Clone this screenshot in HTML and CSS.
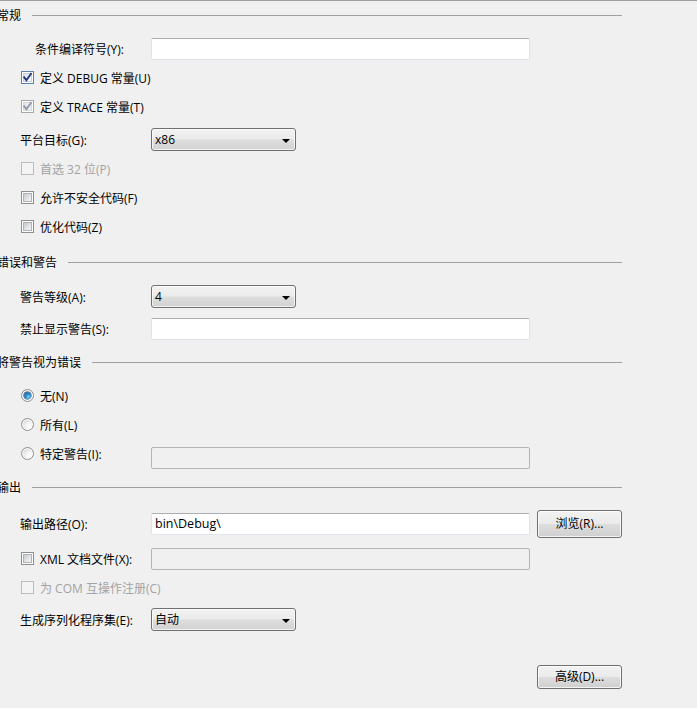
FILE: index.html
```html
<!DOCTYPE html>
<html lang="zh-CN">
<head>
<meta charset="utf-8">
<title>生成</title>
<link rel="stylesheet" href="styles.css">
</head>
<body>
<div class="frame">
  <div class="page">
    <section class="group">
      <div class="group-head"><span class="group-title">常规</span><i class="rule"></i></div>
      <div class="group-body">
        <div class="row">
          <span class="lbl lbl-indent">条件编译符号(Y):</span>
          <div class="textbox"></div>
        </div>
        <div class="row">
          <span class="check checked focus"><svg viewBox="0 0 13 13" width="13" height="13"><path d="M3.2 6.4 L5.4 9.2 L10 2.8" fill="none" stroke="#21357f" stroke-width="1.9" stroke-linecap="square"/></svg></span>
          <span class="opt">定义 DEBUG 常量(U)</span>
        </div>
        <div class="row">
          <span class="check checked dim"><svg viewBox="0 0 13 13" width="13" height="13"><path d="M3.2 6.4 L5.4 9.2 L10 2.8" fill="none" stroke="#8f96ad" stroke-width="1.9" stroke-linecap="square"/></svg></span>
          <span class="opt">定义 TRACE 常量(T)</span>
        </div>
        <div class="row sp4">
          <span class="lbl">平台目标(G):</span>
          <div class="combo"><span>x86</span></div>
        </div>
        <div class="row">
          <span class="check disabled"></span>
          <span class="opt muted">首选 32 位(P)</span>
        </div>
        <div class="row">
          <span class="check"></span>
          <span class="opt">允许不安全代码(F)</span>
        </div>
        <div class="row">
          <span class="check"></span>
          <span class="opt">优化代码(Z)</span>
        </div>
      </div>
    </section>

    <section class="group g-gap7">
      <div class="group-head"><span class="group-title">错误和警告</span><i class="rule"></i></div>
      <div class="group-body pt6">
        <div class="row">
          <span class="lbl">警告等级(A):</span>
          <div class="combo"><span>4</span></div>
        </div>
        <div class="row sp3">
          <span class="lbl">禁止显示警告(S):</span>
          <div class="textbox"></div>
        </div>
      </div>
    </section>

    <section class="group g-gap5">
      <div class="group-head"><span class="group-title">将警告视为错误</span><i class="rule"></i></div>
      <div class="group-body">
        <div class="row">
          <span class="radio selected"></span>
          <span class="opt">无(N)</span>
        </div>
        <div class="row">
          <span class="radio"></span>
          <span class="opt">所有(L)</span>
        </div>
        <div class="row">
          <span class="radio"></span>
          <span class="opt opt-col">特定警告(I):</span>
          <div class="textbox disabled low"></div>
        </div>
      </div>
    </section>

    <section class="group g-gap5">
      <div class="group-head"><span class="group-title">输出</span><i class="rule"></i></div>
      <div class="group-body pt8">
        <div class="row">
          <span class="lbl">输出路径(O):</span>
          <div class="textbox"><span>bin\Debug\</span></div>
          <div class="button tall">浏览(R)...</div>
        </div>
        <div class="row sp6">
          <span class="check"></span>
          <span class="opt opt-col">XML 文档文件(X):</span>
          <div class="textbox disabled"></div>
        </div>
        <div class="row">
          <span class="check disabled"></span>
          <span class="opt muted">为 COM 互操作注册(C)</span>
        </div>
        <div class="row sp3">
          <span class="lbl">生成序列化程序集(E):</span>
          <div class="combo"><span>自动</span></div>
        </div>
      </div>
    </section>

    <div class="actions">
      <div class="button">高级(D)...</div>
    </div>
  </div>
</div>
</body>
</html>
```
FILE: styles.css
```css
html, body {
  margin: 0;
  padding: 0;
  background: #f0f0f0;
}
body {
  font-family: "Open Sans", "Noto Sans CJK SC", "Noto Sans", sans-serif;
  font-size: 12px;
  color: #000;
  overflow: hidden;
}
.frame {
  border-top: 1px solid #a0a0a0;
  height: 707px;
}
.page {
  width: 622px;
}
.group-head {
  height: 28px;
  display: flex;
  align-items: center;
  line-height: 16px;
}
.group-title {
  margin-left: -3px;
  padding-top: 2px;
  white-space: nowrap;
}
.rule {
  flex: 1;
  margin-left: 11px;
  border-top: 1px solid #a0a0a0;
  height: 0;
}
.g-gap7 { margin-top: 7px; }
.g-gap5 { margin-top: 5px; }
.group-body { padding-top: 5px; }
.group-body.pt6 { padding-top: 6px; }
.group-body.pt8 { padding-top: 8px; }

.row {
  height: 29px;
  display: flex;
  align-items: center;
  line-height: 16px;
  padding-left: 20px;
}
.sp3 { margin-top: 3px; }
.sp4 { margin-top: 4px; }
.sp6 { margin-top: 6px; }

.lbl {
  width: 131px;
  flex: none;
  padding-top: 2px;
  white-space: nowrap;
}
.lbl-indent {
  padding-left: 15px;
  box-sizing: border-box;
}
.opt {
  margin-left: 6px;
  padding-top: 2px;
  white-space: nowrap;
}
.opt-col {
  width: 111px;
  flex: none;
}
.muted { color: #a3a3a3; }

.textbox {
  width: 379px;
  height: 22px;
  box-sizing: border-box;
  background: #fff;
  border: 1px solid #e2e3ea;
  border-top-color: #abadb3;
  border-radius: 2px;
  display: flex;
  align-items: center;
  padding-left: 3px;
  flex: none;
}
.textbox span { font-size: 12.5px; padding-top: 1px; }
.textbox.disabled {
  background: #f0f0f0;
  border: 1px solid #b4b4b4;
}
.textbox.low {
  align-self: flex-end;
  margin-bottom: -1px;
}

.combo {
  position: relative;
  width: 145px;
  height: 23px;
  box-sizing: border-box;
  border: 1px solid #707070;
  border-radius: 3px;
  background: linear-gradient(#f2f2f2 0%, #ebebeb 48%, #dddddd 52%, #d2d2d2 100%);
  box-shadow: inset 0 0 0 1px rgba(255,255,255,0.7);
  display: flex;
  align-items: center;
  padding-left: 3px;
  flex: none;
}
.combo span { padding-top: 1px; }
.combo::after {
  content: "";
  position: absolute;
  right: 5px;
  top: 10px;
  border-left: 4px solid transparent;
  border-right: 4px solid transparent;
  border-top: 4px solid #000;
}

.button {
  width: 85px;
  height: 24px;
  box-sizing: border-box;
  border: 1px solid #707070;
  border-radius: 3px;
  background: linear-gradient(#f2f2f2 0%, #ebebeb 48%, #dddddd 52%, #cfcfcf 100%);
  box-shadow: inset 0 0 0 1px rgba(255,255,255,0.75);
  display: flex;
  align-items: center;
  justify-content: center;
  flex: none;
  line-height: 16px;
}
.button.tall {
  height: 28px;
  margin-left: 7px;
}
.actions {
  display: flex;
  justify-content: flex-end;
  margin-top: 31px;
}

.check {
  width: 13px;
  height: 13px;
  box-sizing: border-box;
  border: 1px solid #8e8f8f;
  background: #fff;
  flex: none;
  margin-left: 1px;
  position: relative;
  display: block;
}
.check::before {
  content: "";
  position: absolute;
  left: 1px;
  top: 1px;
  width: 9px;
  height: 9px;
  box-sizing: border-box;
  border: 1px solid #afb3b9;
  background: linear-gradient(135deg, #c4c8ce 0%, #e2e4e7 55%, #f5f5f5 100%);
}
.check svg {
  position: absolute;
  left: -1px;
  top: -1px;
  z-index: 1;
}
.check.checked::before {
  border-color: #c9d3df;
  background: linear-gradient(135deg, #d8e2ee 0%, #eef2f7 60%, #fbfcfd 100%);
}
.check.focus { border-color: #5b83b0; }
.check.dim { border-color: #a8a8a8; }
.check.dim::before {
  border-color: #d8d8d8;
  background: linear-gradient(135deg, #e4e4e4 0%, #f3f3f3 100%);
}
.check.disabled {
  border-color: #bcbcbc;
  background: #f4f4f4;
}
.check.disabled::before {
  border: none;
  background: #f4f4f4;
}

.radio {
  width: 13px;
  height: 13px;
  box-sizing: border-box;
  border-radius: 50%;
  border: 1px solid #8e8f8f;
  background: radial-gradient(circle at 65% 65%, #ffffff 0%, #f1f1f1 35%, #cfd2d6 80%);
  box-shadow: inset 0 0 0 1px #fff;
  flex: none;
  margin-left: 1px;
  position: relative;
  display: block;
}
.radio.selected::after {
  content: "";
  position: absolute;
  left: 2px;
  top: 2px;
  width: 7px;
  height: 7px;
  border-radius: 50%;
  background: radial-gradient(circle at 65% 70%, #7ad0f5 0%, #2a86c5 45%, #1a4f86 100%);
  box-shadow: 0 0 0 0.5px #1f4b78;
}
```
